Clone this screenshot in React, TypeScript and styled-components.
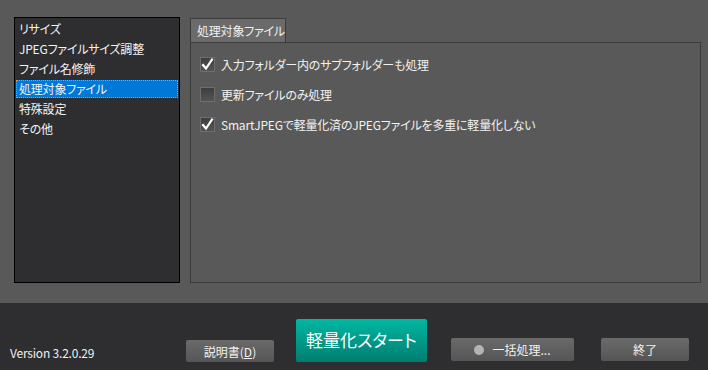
import React from 'react';
import styled, { createGlobalStyle } from 'styled-components';

const GlobalStyle = createGlobalStyle`
  html, body {
    margin: 0;
    padding: 0;
    background: #595959;
  }
  body {
    font-family: "Noto Sans CJK JP", "Noto Sans", "Liberation Sans", sans-serif;
    font-size: 12px;
    font-feature-settings: "palt" 1;
    letter-spacing: -0.2px;
    color: #f2f2f2;
  }
`;

const Window = styled.div`
  width: 708px;
  height: 370px;
  display: flex;
  flex-direction: column;
  overflow: hidden;
`;

const Top = styled.div`
  height: 303px;
  box-sizing: border-box;
  padding: 17px 0 0 14px;
  display: flex;
  gap: 10px;
  background: #595959;
`;

const MenuList = styled.ul`
  list-style: none;
  margin: 0;
  padding: 1px 1px 0;
  width: 166px;
  height: 266px;
  box-sizing: border-box;
  border: 1px solid #000;
  background: #2e2e30;
`;

const MenuItem = styled.li<{ $selected?: boolean }>`
  height: 20px;
  box-sizing: border-box;
  padding-left: 2px;
  display: flex;
  align-items: center;
  line-height: 1;
  white-space: nowrap;
  color: #f4f4f4;
  background: ${(p) => (p.$selected ? '#0078d7' : 'transparent')};
  border: 1px dotted ${(p) => (p.$selected ? '#f0902a' : 'transparent')};
  ${(p) => (p.$selected ? 'height: 18px; margin: 1px 0;' : '')}
`;

const TabArea = styled.div`
  display: flex;
  flex-direction: column;
  width: 511px;
  padding-top: 1px;
`;

const TabStrip = styled.div`
  display: flex;
  height: 24px;
`;

const Tab = styled.div`
  width: 96px;
  box-sizing: border-box;
  padding-left: 6px;
  padding-bottom: 1px;
  display: flex;
  align-items: center;
  background: #6b6b6b;
  border: 1px solid #3b3b3b;
  border-bottom: none;
  color: #f2f2f2;
  white-space: nowrap;
`;

const Panel = styled.div`
  height: 241px;
  box-sizing: border-box;
  border: 1px solid #3b3b3b;
  padding: 14px 0 0 9px;
  display: flex;
  flex-direction: column;
  gap: 15px;
`;

const CheckRow = styled.label`
  display: flex;
  align-items: center;
  gap: 6px;
  height: 15px;
  white-space: nowrap;
  color: #f2f2f2;
`;

const Box = styled.span`
  width: 15px;
  height: 15px;
  box-sizing: border-box;
  border: 1px solid #6e6e6e;
  background: linear-gradient(#3e3e3e, #545454);
  display: flex;
  align-items: center;
  justify-content: center;
`;

const Bottom = styled.div`
  flex: 1;
  background: #2e2e30;
  display: flex;
  align-items: flex-end;
  padding: 0 0 8px 0;
`;

const Version = styled.div`
  width: 186px;
  padding-left: 10px;
  padding-bottom: 1px;
  box-sizing: border-box;
  color: #f0f0f0;
  font-size: 12px;
`;

const GrayButton = styled.button<{ $w: number; $h: number; $mb?: number; $mr?: number }>`
  width: ${(p) => p.$w}px;
  height: ${(p) => p.$h}px;
  margin-bottom: ${(p) => p.$mb ?? 0}px;
  margin-right: ${(p) => p.$mr ?? 0}px;
  border: none;
  border-radius: 2px;
  background: linear-gradient(#6a6a6a, #555555);
  color: #f2f2f2;
  font-family: inherit;
  font-feature-settings: "palt" 1;
  font-size: 12px;
  padding: 0;
  display: flex;
  align-items: center;
  justify-content: center;
  gap: 8px;
`;

const StartButton = styled.button`
  width: 131px;
  height: 43px;
  margin: 0 24px 0 22px;
  border: none;
  border-radius: 2px;
  background: linear-gradient(#00b8a2, #007d70);
  color: #ffffff;
  font-family: inherit;
  font-feature-settings: "palt" 1;
  font-size: 17px;
  padding: 0 0 2px;
`;

const Dot = styled.span`
  width: 10px;
  height: 10px;
  border-radius: 50%;
  background: #b4b4b4;
`;

const Check = () => (
  <svg width="13" height="13" viewBox="0 0 13 13">
    <path d="M2 7 L5 10.5 L11 1.5" fill="none" stroke="#ffffff" strokeWidth="2.2" strokeLinecap="square" />
  </svg>
);

const menu = ['リサイズ', 'JPEGファイルサイズ調整', 'ファイル名修飾', '処理対象ファイル', '特殊設定', 'その他'];

const options = [
  { label: '入力フォルダー内のサブフォルダーも処理', checked: true },
  { label: '更新ファイルのみ処理', checked: false },
  { label: 'SmartJPEGで軽量化済のJPEGファイルを多重に軽量化しない', checked: true },
];

export default function App() {
  return (
    <>
      <GlobalStyle />
      <Window>
        <Top>
          <MenuList>
            {menu.map((m, i) => (
              <MenuItem key={m} $selected={i === 3}>
                {m}
              </MenuItem>
            ))}
          </MenuList>
          <TabArea>
            <TabStrip>
              <Tab>処理対象ファイル</Tab>
            </TabStrip>
            <Panel>
              {options.map((o) => (
                <CheckRow key={o.label}>
                  <Box>{o.checked && <Check />}</Box>
                  {o.label}
                </CheckRow>
              ))}
            </Panel>
          </TabArea>
        </Top>
        <Bottom>
          <Version>Version 3.2.0.29</Version>
          <GrayButton $w={88} $h={22}>
            <span>
              説明書(<u>D</u>)
            </span>
          </GrayButton>
          <StartButton>軽量化スタート</StartButton>
          <GrayButton $w={123} $h={23} $mb={1} $mr={27}>
            <Dot />
            一括処理...
          </GrayButton>
          <GrayButton $w={88} $h={23} $mb={1}>
            終了
          </GrayButton>
        </Bottom>
      </Window>
    </>
  );
}
